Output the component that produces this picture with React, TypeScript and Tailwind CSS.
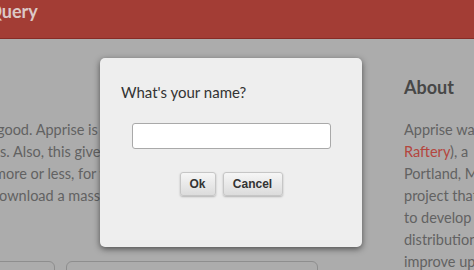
import React from 'react';

const body = '"Lato", "Open Sans", sans-serif';

const leftLines: { text: string; shift: string }[] = [
  { text: 'good. Apprise is simple, small and easy to use', shift: 'ml-[-3px]' },
  { text: 's. Also, this gives you a nice little dialog', shift: 'ml-0' },
  { text: 'more or less, for whatever you want it to', shift: 'ml-[-6px]' },
  { text: 'download a massive library just to get it', shift: 'ml-[-9px]' },
];

const rightLines = [
  'Apprise was made by',
  'Raftery), a',
  'Portland, Maine',
  'project that',
  'to develop',
  'distribution',
  'improve upon',
];

const buttonFont = { fontFamily: '"Liberation Sans", Arial, sans-serif' };

export default function App() {
  return (
    <div className="relative w-[474px] h-[270px] overflow-hidden bg-[#acacac]" style={{ fontFamily: body }}>
      {/* Header */}
      <header className="h-[39px] bg-[#a33d35] border-b border-[#872c26] overflow-hidden">
        <div className="ml-[-17px] pt-[1px] text-[18px] font-bold text-[#dcc9c7] whitespace-nowrap leading-[20px]">
          jQuery
        </div>
      </header>

      <div className="flex">
        {/* Main column */}
        <main className="w-[404px] shrink-0 pt-[80px]">
          <div className="text-[14.5px] leading-[22px] text-[#626262]">
            {leftLines.map((l) => (
              <div key={l.text} className={`whitespace-nowrap ${l.shift}`}>
                {l.text}
              </div>
            ))}
          </div>
          <div className="mt-[54px] flex gap-[11px]">
            <div className="ml-[-10px] w-[65px] h-[30px] rounded-[6px] border border-[#8e8e8e]" />
            <div className="w-[252px] h-[30px] rounded-[6px] border border-[#8e8e8e]" />
          </div>
        </main>

        {/* Sidebar */}
        <aside className="w-[200px] shrink-0 pt-[37px]">
          <h2 className="text-[18px] font-bold leading-[22px] text-[#474747]">About</h2>
          <div className="mt-[21px] text-[14.5px] leading-[22px] text-[#626262]">
            {rightLines.map((t, i) => (
              <div key={t} className="whitespace-nowrap">
                {i === 1 ? (
                  <>
                    <span className="text-[#b4463e]">Raftery</span>), a
                  </>
                ) : (
                  t
                )}
              </div>
            ))}
          </div>
        </aside>
      </div>

      {/* Prompt dialog */}
      <div className="absolute left-[100px] top-[58px] w-[262px] h-[189px] rounded-[5px] bg-[#eeeeee] shadow-[0_2px_6px_rgba(0,0,0,0.55)] flex flex-col">
        <p className="ml-[21px] mt-[23px] text-[15px] leading-[22px] text-[#333333]">What's your name?</p>
        <input
          type="text"
          className="self-center mt-[20px] w-[199px] h-[26px] bg-white border border-[#a9a9a9] rounded-[3px] outline-none"
        />
        <div className="mt-[23px] flex justify-center gap-[7px]">
          <button
            className="w-[36px] h-[24px] rounded-[3px] border border-[#c6c6c6] bg-gradient-to-b from-[#f6f6f6] to-[#dcdcdc] shadow-[0_1px_2px_rgba(0,0,0,0.25)] text-[12px] font-bold text-[#333333]"
            style={buttonFont}
          >
            Ok
          </button>
          <button
            className="w-[60px] h-[24px] rounded-[3px] border border-[#c6c6c6] bg-gradient-to-b from-[#f6f6f6] to-[#dcdcdc] shadow-[0_1px_2px_rgba(0,0,0,0.25)] text-[12px] font-bold text-[#333333]"
            style={buttonFont}
          >
            Cancel
          </button>
        </div>
      </div>
    </div>
  );
}
